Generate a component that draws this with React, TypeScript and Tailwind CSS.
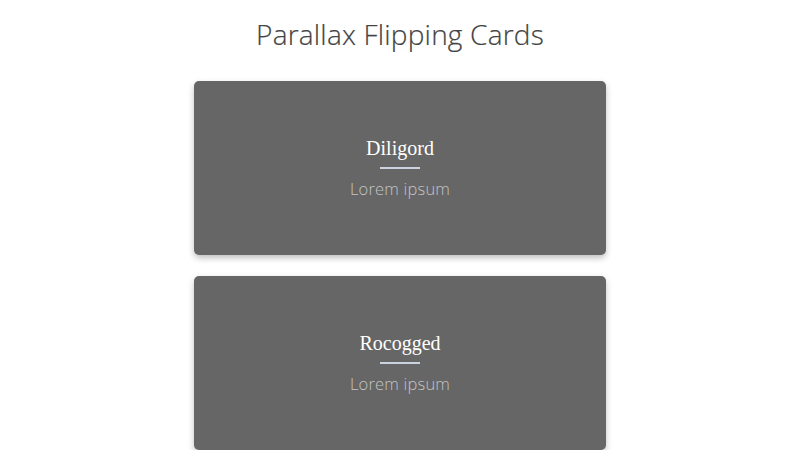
export default function App() {
  const cards = [
    { title: "Diligord", sub: "Lorem ipsum" },
    { title: "Rocogged", sub: "Lorem ipsum" },
  ];
  return (
    <div className="w-[800px] h-[450px] overflow-hidden bg-white flex flex-col items-center">
      <h1
        className="mt-[17px] text-[28px] leading-[34px] font-light text-[#444444] tracking-[0.2px]"
        style={{ fontFamily: '"Open Sans", "Noto Sans", sans-serif', WebkitTextStroke: "0.2px #444444" }}
      >
        Parallax Flipping Cards
      </h1>
      <div className="mt-[30px] flex flex-col gap-[21px]">
        {cards.map((c) => (
          <div
            key={c.title}
            className="w-[412px] h-[174px] rounded-[5px] bg-[#666666] shadow-[0_3px_6px_rgba(0,0,0,0.25)] flex flex-col items-center pt-[54px]"
          >
            <div
              className="text-[20px] leading-[26px] text-white"
              style={{ fontFamily: '"Liberation Serif", "DejaVu Serif", serif' }}
            >
              {c.title}
            </div>
            <div className="mt-[6px] w-[40px] h-[2px] bg-[#c9d3e0]" />
            <div
              className="mt-[10px] text-[16.5px] leading-[20px] font-light text-[#c4c4c4] tracking-[0.2px]"
              style={{ fontFamily: '"Open Sans", "Noto Sans", sans-serif' }}
            >
              {c.sub}
            </div>
          </div>
        ))}
      </div>
    </div>
  );
}
